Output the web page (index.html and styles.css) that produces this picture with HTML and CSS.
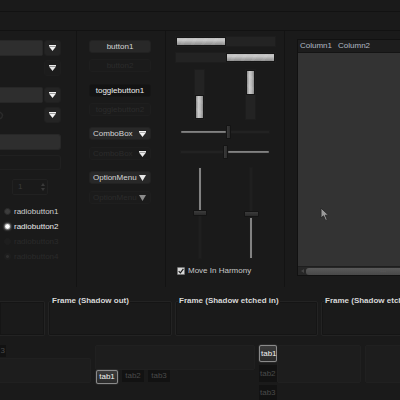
FILE: index.html
```html
<!DOCTYPE html>
<html>
<head>
<meta charset="utf-8">
<title>Widget factory</title>
<link rel="stylesheet" href="styles.css">
</head>
<body>
<div class="win">
  <div class="menubar"></div>
  <div class="toolbar"></div>
  <div class="main">
    <div class="col c1">
      <div class="cbe r1"><div class="entry"></div><div class="arrbtn"><svg class="arr" width="7" height="6" viewBox="0 0 7 6"><rect x="0" y="0" width="7" height="1.2" fill="#f2f2f2"/><polygon points="0,1.6 7,1.6 3.5,6" fill="#f2f2f2"/></svg></div></div>
      <div class="cbe r2"><div class="blank"></div><div class="arrbtn flat"><svg class="arr" width="7" height="6" viewBox="0 0 7 6"><rect x="0" y="0" width="7" height="1.2" fill="#e6e6e6"/><polygon points="0,1.6 7,1.6 3.5,6" fill="#e6e6e6"/></svg></div></div>
      <div class="cbe r3"><div class="entry"></div><div class="arrbtn"><svg class="arr" width="7" height="6" viewBox="0 0 7 6"><rect x="0" y="0" width="7" height="1.2" fill="#f2f2f2"/><polygon points="0,1.6 7,1.6 3.5,6" fill="#f2f2f2"/></svg></div></div>
      <div class="cbe r4"><div class="blank"><svg class="ghost" width="6" height="9" viewBox="0 0 6 9"><path d="M0 1 Q5 4.5 0 8" stroke="#2a2a2a" stroke-width="1.5" fill="none"/></svg></div><div class="arrbtn"><svg class="arr" width="7" height="6" viewBox="0 0 7 6"><rect x="0" y="0" width="7" height="1.2" fill="#f2f2f2"/><polygon points="0,1.6 7,1.6 3.5,6" fill="#f2f2f2"/></svg></div></div>
      <div class="entry wide"></div>
      <div class="entry wide dis"></div>
      <div class="spin"><span class="spinval">1</span><span class="spinarr"><i class="up"></i><i class="dn"></i></span></div>
      <div class="radios">
        <div class="radio"><span class="dot"></span><span>radiobutton1</span></div>
        <div class="radio on"><span class="dot"></span><span>radiobutton2</span></div>
        <div class="radio off"><span class="dot"></span><span>radiobutton3</span></div>
        <div class="radio off sel"><span class="dot"></span><span>radiobutton4</span></div>
      </div>
    </div>

    <div class="col c2">
      <div class="btn b1">button1</div>
      <div class="btn dis b2">button2</div>
      <div class="btn pressed b3">togglebutton1</div>
      <div class="btn dis b4">togglebutton2</div>
      <div class="btn combo b5"><span>ComboBox</span><svg width="7" height="6" viewBox="0 0 7 6"><rect x="0" y="0" width="7" height="1.4" fill="#f4f4f4"/><polygon points="0,1.6 7,1.6 3.5,6" fill="#f4f4f4"/></svg></div>
      <div class="btn combo dis b6"><span>ComboBox</span><svg width="7" height="6" viewBox="0 0 7 6"><rect x="0" y="0" width="7" height="1.4" fill="#e8e8e8"/><polygon points="0,1.6 7,1.6 3.5,6" fill="#e8e8e8"/></svg></div>
      <div class="btn combo b7"><span>OptionMenu</span><svg width="7" height="6" viewBox="0 0 7 6"><polygon points="0,0 7,0 3.5,6" fill="#e6e6e6"/></svg></div>
      <div class="btn combo dis b8"><span>OptionMenu</span><svg width="7" height="6" viewBox="0 0 7 6"><polygon points="0,0 7,0 3.5,6" fill="#8a8a8a"/></svg></div>
    </div>

    <div class="col c3">
      <div class="hprog p1"><div class="fill" style="width:50%"></div></div>
      <div class="hprog p2"><div class="fill" style="width:50%"></div></div>
      <div class="vprogs">
        <div class="vprog vp1"><div class="fill" style="height:50%"></div></div>
        <div class="vprog vp2"><div class="fill" style="height:50%"></div></div>
      </div>
      <div class="hscale s1"><div class="trough"><div class="tfill" style="width:51%"></div></div><div class="knob" style="left:46px"></div></div>
      <div class="hscale s2"><div class="trough"><div class="tfill right" style="width:47%"></div></div><div class="knob" style="left:43px"></div></div>
      <div class="vscales">
        <div class="vscale vs1"><div class="vtrough"><div class="vfill" style="height:48%"></div></div><div class="vknob" style="top:43px"></div></div>
        <div class="vscale vs2"><div class="vtrough"><div class="vfill bottom" style="height:45%"></div></div><div class="vknob" style="top:44px"></div></div>
      </div>
      <div class="check"><span class="cbox"><svg width="7" height="6" viewBox="0 0 7 6"><path d="M0.8 3.2 L2.8 5.2 L6.3 0.6" stroke="#1a1a1a" stroke-width="1.4" fill="none"/></svg></span><span>Move In Harmony</span></div>
    </div>

    <div class="col c4">
      <div class="tree">
        <div class="thead"><span>Column1</span><span>Column2</span></div>
        <div class="tbody"></div>
        <div class="hscroll"><span class="sarrow"></span><span class="sthumb"><span class="grip">···</span></span></div>
      </div>
    </div>
  </div>

  <div class="frames">
    <div class="frame f0"></div>
    <div class="frame f1"><span class="flabel">Frame (Shadow out)</span></div>
    <div class="frame f2"><span class="flabel">Frame (Shadow etched in)</span></div>
    <div class="frame f3"><span class="flabel">Frame (Shadow etched out)</span></div>
  </div>

  <div class="notebooks">
    <div class="nb nb1">
      <div class="tabs-top"><span class="tab">3</span></div>
      <div class="panel"></div>
    </div>
    <div class="nb nb2">
      <div class="panel"></div>
      <div class="tabs-bottom"><span class="tab active">tab1</span><span class="tab">tab2</span><span class="tab">tab3</span></div>
    </div>
    <div class="nb nb3">
      <div class="tabs-left"><span class="tab active">tab1</span><span class="tab">tab2</span><span class="tab">tab3</span></div>
      <div class="panel"></div>
    </div>
    <div class="nb nb4">
      <div class="panel"></div>
    </div>
  </div>

  <svg class="cursor" width="10" height="15" viewBox="0 0 10 15"><polygon points="1,1 1,11 3.5,8.8 5.6,13.5 7.3,12.7 5.3,8.2 8.6,8.2" fill="#9a9a9a" stroke="#2a2a2a" stroke-width="1"/></svg>
</div>
</body>
</html>
```

FILE: styles.css
```css
* { box-sizing: border-box; margin: 0; padding: 0; }
html, body { width: 400px; height: 400px; overflow: hidden; background: #1a1a1a; }
body { font-family: "Liberation Sans", Arial, sans-serif; font-size: 8px; line-height: 1; color: #d4d4d4; }

.win { position: relative; width: 400px; height: 400px; overflow: hidden; background: #1a1a1a; }
.menubar { height: 12px; border-bottom: 1px solid #121212; }
.toolbar { height: 19px; border-bottom: 1px solid #121212; }

.main { display: grid; grid-template-columns: 77px 89px 119px 115px; height: 256px; }
.col { display: flex; flex-direction: column; align-items: flex-start; border-right: 1px solid #131313; }
.c4 { border-right: 0; }

/* column 1 */
.cbe { display: flex; gap: 1px; height: 16px; }
.r1 { margin-top: 9px; }
.r2 { margin-top: 4px; height: 15px; }
.r3 { margin-top: 12px; }
.r4 { margin-top: 4px; }
.entry { width: 43px; height: 16px; background: #2e2e2e; border: 1px solid #272727; border-left: 0; border-radius: 0 2px 2px 0; }
.blank { width: 43px; display: flex; align-items: center; }
.arrbtn { width: 17px; height: 16px; background: #242424; border: 1px solid #202020; border-radius: 3px; display: flex; align-items: center; justify-content: center; }
.arrbtn.flat { background: #1c1c1c; border-color: #1e1e1e; }
.entry.wide { width: 61px; margin-top: 11px; border-radius: 0 3px 3px 0; }
.entry.dis { margin-top: 5px; height: 15px; background: #1a1a1a; border: 1px solid #202020; border-left: 0; }
.spin { margin: 9px 0 0 12px; width: 36px; height: 16px; border: 1px solid #212121; border-radius: 2px; display: flex; align-items: center; justify-content: space-between; padding: 0 2px 0 5px; }
.spinval { color: #3a3a3a; }
.spinarr { display: flex; flex-direction: column; gap: 2px; }
.spinarr i { display: block; width: 0; height: 0; border-left: 2.5px solid transparent; border-right: 2.5px solid transparent; }
.spinarr .up { border-bottom: 3px solid #3a3a3a; }
.spinarr .dn { border-top: 3px solid #3a3a3a; }

.radios { margin-top: 9px; display: flex; flex-direction: column; }
.radio { height: 15px; display: flex; align-items: center; gap: 3px; padding-left: 4px; color: #d0d0d0; }
.radio .dot { width: 7px; height: 7px; border-radius: 50%; background: #3c3c3c; border: 1px solid #2a2a2a; }
.radio.on { color: #ececec; }
.radio.on .dot { background: radial-gradient(circle, #ffffff 0 45%, #cfcfcf 70%); border-color: #8a8a8a; box-shadow: 0 0 2px #888; }
.radio.off { color: #2a2a2a; }
.radio.off .dot { background: #1e1e1e; border-color: #1f1f1f; }
.radio.off.sel .dot { background: radial-gradient(circle, #2e2e2e 0 35%, #1e1e1e 45%); }

/* column 2 */
.c2 { padding-left: 12px; }
.btn { width: 62px; height: 13px; border-radius: 3px; background: #282828; border: 1px solid #222222; display: flex; align-items: center; justify-content: center; color: #d6d6d6; }
.btn.dis { background: #1b1b1b; border-color: #1e1e1e; color: #2b2b2b; }
.btn.pressed { background: #131313; border-color: #161616; color: #f0f0f0; }
.btn.combo { justify-content: space-between; padding: 0 4px 0 3px; }
.b1 { margin-top: 9px; }
.b2 { margin-top: 6px; }
.b3 { margin-top: 12px; }
.b4 { margin-top: 6px; }
.b5 { margin-top: 11px; }
.b6 { margin-top: 7px; }
.b7 { margin-top: 11px; }
.b8 { margin-top: 7px; }

/* column 3 */
.c3 { padding-left: 9px; }
.hprog { width: 101px; height: 11px; background: #232323; border: 1px solid #1d1d1d; display: flex; }
.p1 { margin-top: 5px; }
.p2 { margin-top: 5px; justify-content: flex-end; }
.fill { background: repeating-linear-gradient(120deg, rgba(255,255,255,0) 0 6px, rgba(255,255,255,0.06) 6px 9px), linear-gradient(#bdbdbd, #c8c8c8 30%, #a4a4a4 70%, #8a8a8a); border: 1px solid #151515; }
.hprog .fill { height: 100%; }
.vprogs { margin-top: 6px; margin-left: 19px; display: flex; gap: 40px; }
.vprog { width: 11px; height: 51px; background: #232323; border: 1px solid #1d1d1d; display: flex; flex-direction: column; justify-content: flex-end; }
.vp2 { justify-content: flex-start; }
.vprog .fill { width: 100%; background: repeating-linear-gradient(30deg, rgba(255,255,255,0) 0 6px, rgba(255,255,255,0.06) 6px 9px), linear-gradient(90deg, #8a8a8a, #c8c8c8 35%, #bdbdbd 60%, #8a8a8a); }

.hscale { position: relative; margin-left: 5px; width: 90px; height: 14px; display: flex; align-items: center; }
.s1 { margin-top: 5px; }
.s2 { margin-top: 6px; }
.trough { width: 90px; height: 4px; background: #222222; border: 1px solid #1c1c1c; display: flex; }
.s2 .trough { justify-content: flex-end; }
.tfill { height: 100%; background: linear-gradient(#8a8a8a, #6a6a6a); border-radius: 1px; }
.knob { position: absolute; top: 0; width: 5px; height: 14px; background: linear-gradient(90deg, #3a3a3a, #2c2c2c); border: 1px solid #141414; border-radius: 1px; }

.vscales { margin-top: 8px; margin-left: 18px; display: flex; gap: 37px; }
.vscale { position: relative; width: 14px; height: 92px; display: flex; justify-content: center; }
.vtrough { width: 4px; height: 100%; background: #1f1f1f; border: 1px solid #1c1c1c; display: flex; flex-direction: column; }
.vs2 .vtrough { justify-content: flex-end; }
.vfill { width: 100%; background: linear-gradient(90deg, #6a6a6a, #9a9a9a, #6a6a6a); }
.vknob { position: absolute; left: 0; width: 14px; height: 6px; background: linear-gradient(#3c3c3c, #2a2a2a); border: 1px solid #141414; border-radius: 1px; }
.vs2 .vknob { width: 15px; }

.check { margin-top: 8px; margin-left: 2px; display: flex; align-items: center; gap: 3px; color: #c8c8c8; }
.cbox { width: 8px; height: 8px; background: #d8d8d8; border: 1px solid #777; border-radius: 1px; display: flex; align-items: center; justify-content: center; }

/* column 4 */
.c4 { padding-left: 12px; }
.tree { margin-top: 8px; width: 110px; height: 237px; border: 1px solid #111111; display: flex; flex-direction: column; background: #1c1c1c; }
.thead { height: 13px; display: flex; align-items: center; gap: 6px; padding-left: 2px; color: #b0b9c4; background: #1d1d1d; border-bottom: 1px solid #141414; }
.tbody { flex: 1; background: #333333; }
.hscroll { height: 9px; background: #262626; display: flex; align-items: center; padding-left: 1px; gap: 2px; border-top: 1px solid #1e1e1e; }
.sarrow { width: 0; height: 0; border-top: 2.5px solid transparent; border-bottom: 2.5px solid transparent; border-right: 3px solid #444; margin-left: 2px; }
.sthumb { width: 100px; height: 7px; background: linear-gradient(#5a5a5a, #484848); border-radius: 3px 0 0 3px; display: flex; align-items: center; justify-content: flex-end; padding-right: 20px; font-size: 6px; color: #6a6a6a; }

/* frames */
.frames { display: flex; gap: 3px; height: 56px; padding-top: 14px; }
.frame { position: relative; flex-shrink: 0; height: 35px; border: 1px solid #232323; border-radius: 2px; box-shadow: inset 0 0 0 1px #151515; }
.f0 { width: 45px; border-left: 0; border-radius: 0 2px 2px 0; }
.f1 { width: 124px; }
.f2 { width: 143px; }
.f3 { width: 120px; }
.flabel { position: absolute; left: 2px; top: -5px; background: #1a1a1a; padding: 0 1px; font-weight: bold; color: #d8d8d8; white-space: nowrap; }

/* notebooks */
.notebooks { display: flex; height: 58px; padding-top: 2px; }
.nb { display: flex; flex-shrink: 0; }
.tab { display: flex; align-items: center; justify-content: center; background: #121212; color: #4a4a4a; font-size: 8px; }
.tab.active { background: linear-gradient(#3a3a3a, #2a2a2a); color: #f2f2f2; border: 1px solid #8a8a8a; border-radius: 2px; box-shadow: 0 0 1px #aaa; }
.panel { background: #1d1d1d; border: 1px solid #202020; border-radius: 2px; }

.nb1 { flex-direction: column; width: 91px; }
.nb1 .tabs-top { height: 13px; display: flex; }
.nb1 .tab { width: 6px; height: 12px; justify-content: flex-end; padding-right: 1px; }
.nb1 .panel { height: 25px; border-left: 0; border-radius: 0 2px 2px 0; }

.nb2 { flex-direction: column; width: 160px; margin-left: 4px; }
.nb2 .panel { height: 25px; }
.tabs-bottom { display: flex; gap: 4px; padding-left: 1px; }
.tabs-bottom .tab { width: 22px; height: 12px; }
.tabs-bottom .tab.active { height: 14px; }

.nb3 { width: 102px; margin-left: 4px; }
.tabs-left { width: 18px; display: flex; flex-direction: column; gap: 3px; }
.tabs-left .tab { height: 18px; justify-content: flex-start; padding-left: 1px; }
.tabs-left .tab.active { height: 19px; }
.nb3 .panel { width: 84px; height: 38px; }

.nb4 { margin-left: 4px; }
.nb4 .panel { width: 60px; height: 38px; }

.cursor { position: absolute; left: 320px; top: 207px; }
```
